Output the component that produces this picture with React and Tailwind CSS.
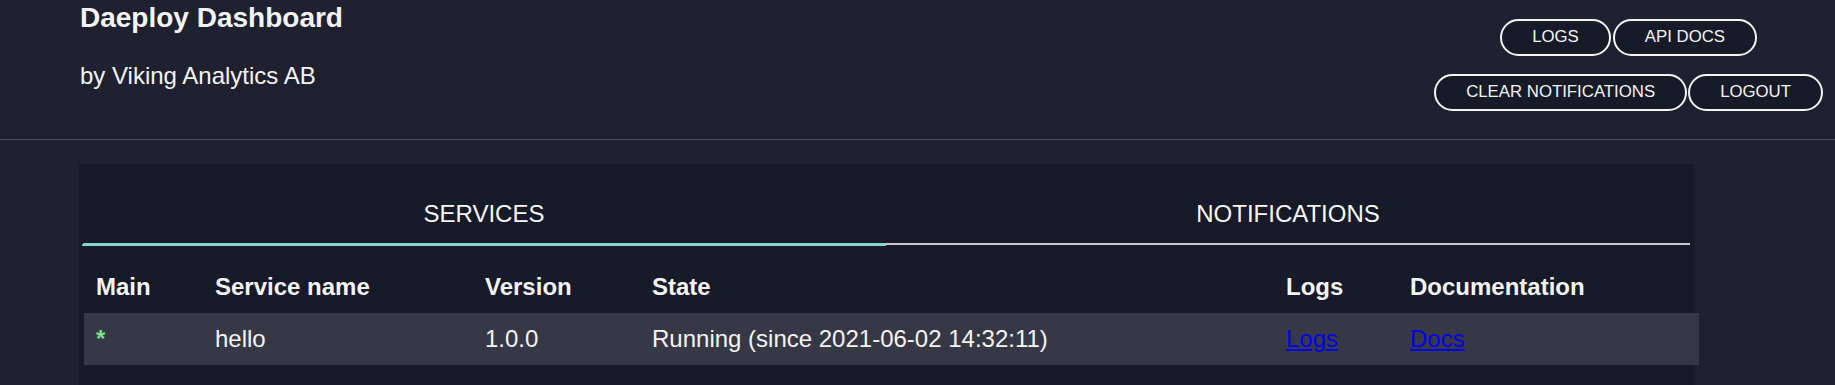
import React from "react";

const font = { fontFamily: '"Liberation Sans", Arial, Helvetica, sans-serif' };

function PillButton({ children }) {
  return (
    <button className="h-[37px] px-[30px] rounded-full border-2 border-[#f4f4f4] bg-[#171a27] text-[#f4f4f4] text-[16.8px] leading-none uppercase whitespace-nowrap">
      {children}
    </button>
  );
}

const cols = [
  { label: "Main", w: "w-[119px]" },
  { label: "Service name", w: "w-[270px]" },
  { label: "Version", w: "w-[167px]" },
  { label: "State", w: "w-[634px]" },
  { label: "Logs", w: "w-[124px]" },
  { label: "Documentation", w: "w-[301px]" },
];

export default function App() {
  return (
    <div className="min-h-screen h-[385px] overflow-hidden bg-[#1f2130] text-white leading-[1.15]" style={font}>
      {/* Header */}
      <header className="h-[140px] border-b border-[#4a4d59] flex justify-between">
        <div className="pl-[80px] pt-[2px]">
          <h1 className="text-[28px] font-bold text-[#f4f4f4]">Daeploy Dashboard</h1>
          <p className="mt-[28px] text-[24px] text-[#f4f4f4]">by Viking Analytics AB</p>
        </div>
        <div className="pt-[19px] pr-[12px] flex flex-col items-center gap-[18px]">
          <div className="flex gap-[2px]">
            <PillButton>Logs</PillButton>
            <PillButton>API Docs</PillButton>
          </div>
          <div className="flex gap-[1px]">
            <PillButton>Clear Notifications</PillButton>
            <PillButton>Logout</PillButton>
          </div>
        </div>
      </header>

      {/* Panel */}
      <main className="pt-[24px] pl-[79px]">
        <div className="w-[1615px] bg-[#171a28] pb-[60px]">
          <div className="flex pl-[3px] pr-[4px]">
            <div className="flex-1 flex flex-col">
              <div className="h-[79px] pt-[36px] text-center text-[24px] text-[#f8f8f8]">SERVICES</div>
              <div className="h-[3px] bg-[#82d8cf] rounded-tl-[3px]"></div>
            </div>
            <div className="flex-1 flex flex-col">
              <div className="h-[79px] pt-[36px] text-center text-[24px] text-[#f8f8f8]">NOTIFICATIONS</div>
              <div className="h-[2px] bg-[#c9cbd0]"></div>
              <div className="h-[1px]"></div>
            </div>
          </div>

          <table className="ml-[5px] mt-[14px] w-[1615px] border-collapse text-[24px] text-[#f4f4f4]">
            <thead>
              <tr className="h-[53px]">
                {cols.map((c) => (
                  <th key={c.label} className={`${c.w} pl-[12px] text-left font-bold`}>
                    {c.label}
                  </th>
                ))}
              </tr>
            </thead>
            <tbody>
              <tr className="h-[52px] bg-[#363945]">
                <td className="pl-[12px] align-middle">
                  <span className="text-[#7ee08a] font-bold">*</span>
                </td>
                <td className="pl-[12px]">hello</td>
                <td className="pl-[12px]">1.0.0</td>
                <td className="pl-[12px] whitespace-nowrap">Running (since 2021-06-02 14:32:11)</td>
                <td className="pl-[12px]">
                  <a href="#" className="text-[#0000ee] underline">Logs</a>
                </td>
                <td className="pl-[12px]">
                  <a href="#" className="text-[#0000ee] underline">Docs</a>
                </td>
              </tr>
            </tbody>
          </table>
        </div>
      </main>
    </div>
  );
}
